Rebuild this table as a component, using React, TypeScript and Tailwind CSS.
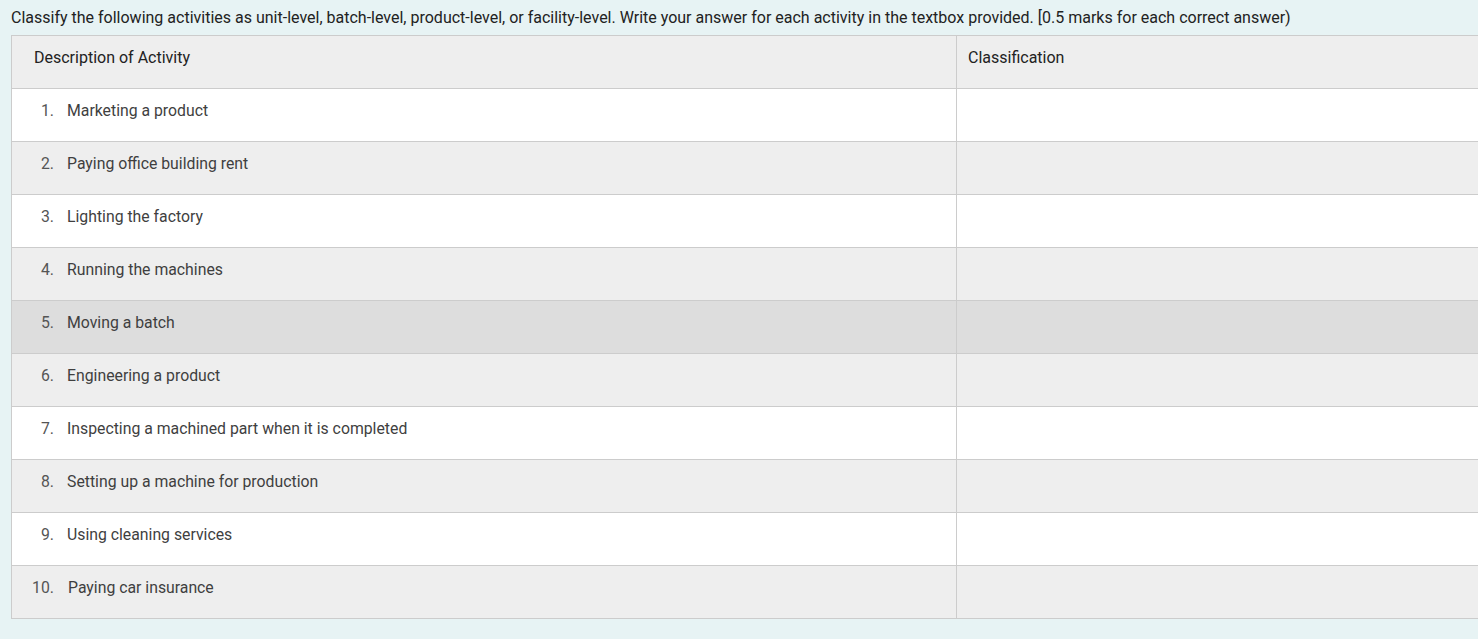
import React from "react";

const activities = [
  "Marketing a product",
  "Paying office building rent",
  "Lighting the factory",
  "Running the machines",
  "Moving a batch",
  "Engineering a product",
  "Inspecting a machined part when it is completed",
  "Setting up a machine for production",
  "Using cleaning services",
  "Paying car insurance",
];

export default function App() {
  return (
    <div
      className="min-h-screen w-full overflow-hidden bg-[#e7f3f4] text-[#222]"
      style={{ fontFamily: "Roboto, 'Liberation Sans', sans-serif" }}
    >
      <div className="pl-[11px] pt-[8px]">
        <p className="text-[16px] leading-[20px] text-[#222] whitespace-nowrap">
          Classify the following activities as unit-level, batch-level, product-level, or facility-level. Write your answer for each activity in the textbox provided. [0.5 marks for each correct answer)
        </p>

        <table className="mt-[7px] w-[1520px] border-collapse text-[16px] leading-[19px]">
          <thead>
            <tr className="h-[53px] bg-[#eeeeee]">
              <th className="w-[945px] border border-[#cccccc] pl-[22px] pt-[12px] align-top text-left font-normal text-[#222]">
                Description of Activity
              </th>
              <th className="border border-[#cccccc] pl-[11px] pt-[12px] align-top text-left font-normal text-[#222]">
                Classification
              </th>
            </tr>
          </thead>
          <tbody>
            {activities.map((a, i) => {
              // row 5 is the hovered one
              const bg =
                i === 4 ? "bg-[#dddddd]" : i % 2 === 0 ? "bg-white" : "bg-[#eeeeee]";
              return (
                <tr key={i} className={`h-[53px] ${bg}`}>
                  <td className="border border-[#cccccc] p-0 pt-[12px] align-top">
                    <div className="flex text-[15.8px] text-[#3f3f3f]">
                      <span className="w-[42px] text-right text-[#555]">{i + 1}.</span>
                      <span className={i === 9 ? "ml-[14px]" : "ml-[13px]"}>{a}</span>
                    </div>
                  </td>
                  <td className="border border-[#cccccc] p-0" />
                </tr>
              );
            })}
          </tbody>
        </table>
      </div>
    </div>
  );
}
